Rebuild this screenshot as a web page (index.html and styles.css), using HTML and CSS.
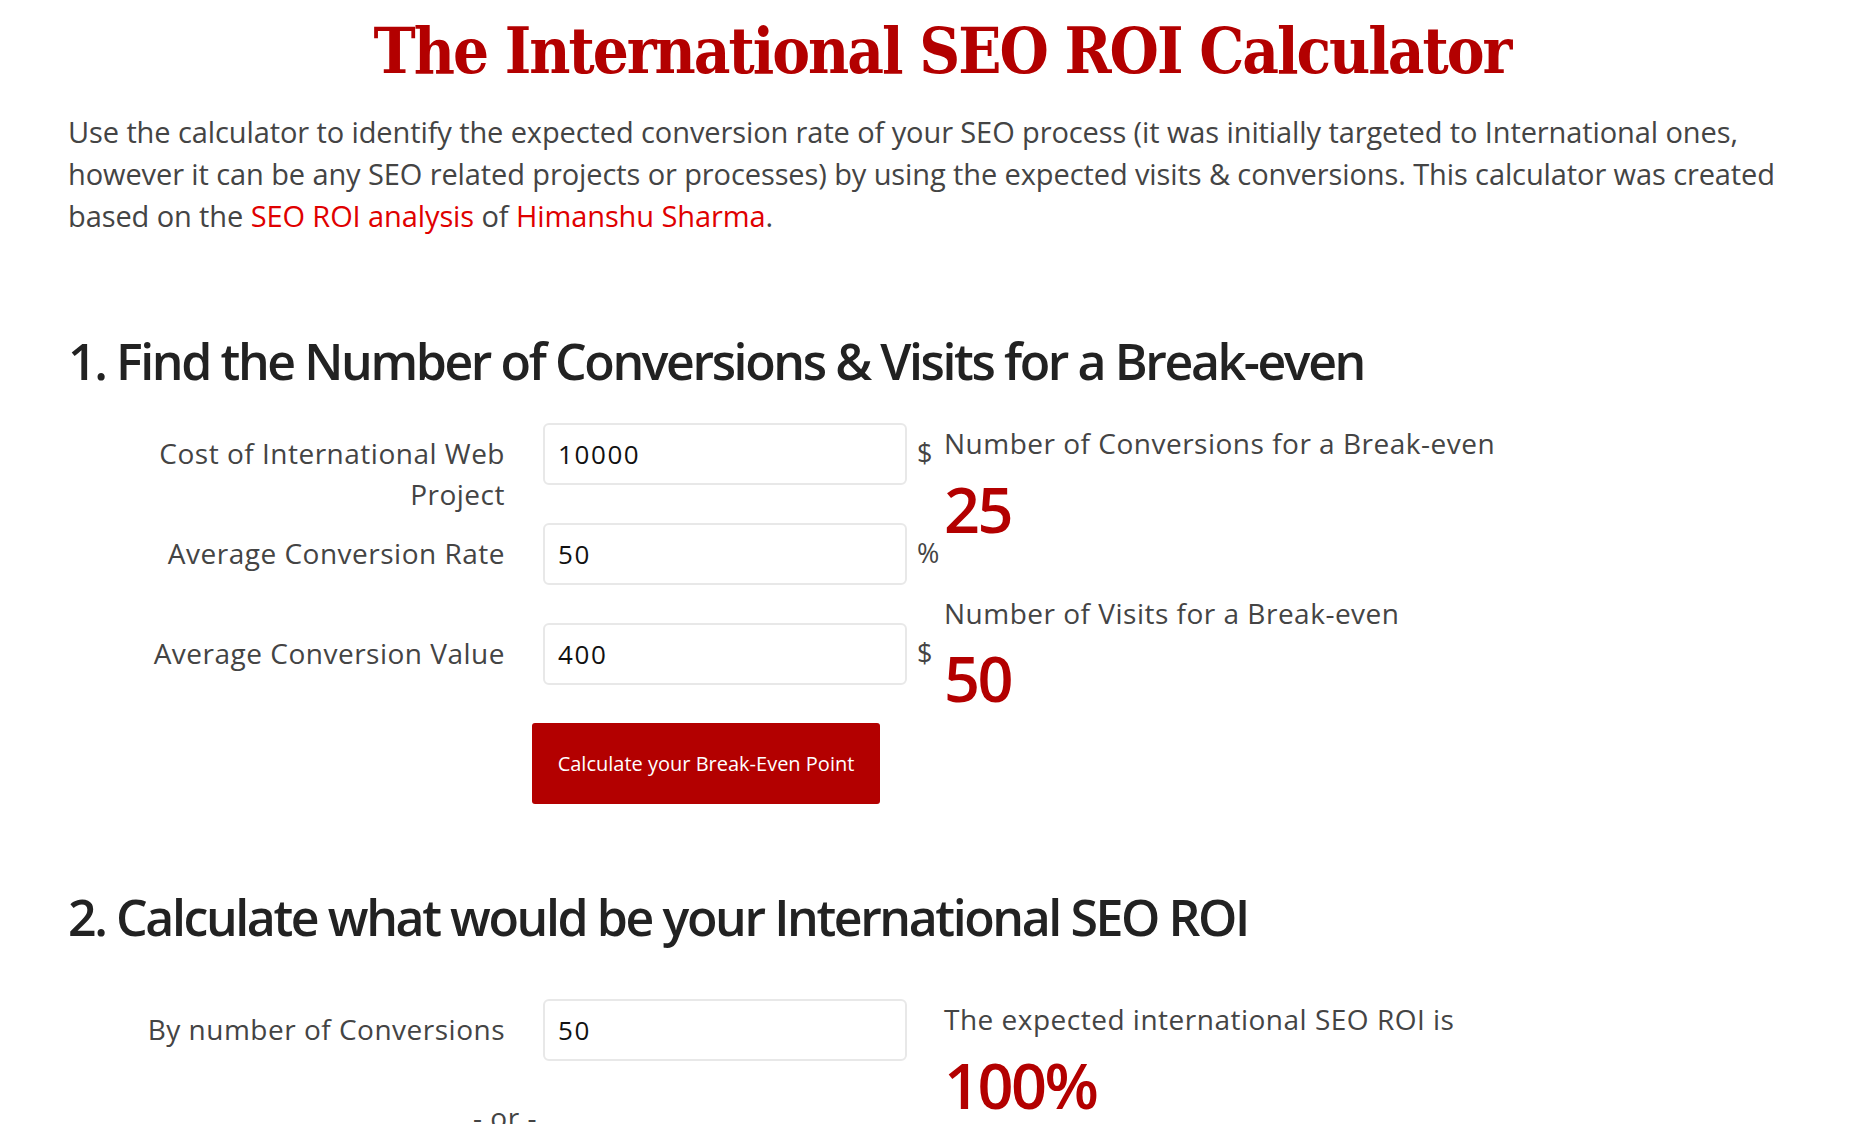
FILE: index.html
```html
<!DOCTYPE html>
<html lang="en">
<head>
    <meta charset="UTF-8">
    <meta name="viewport" content="width=device-width, initial-scale=1.0">
    <title>International SEO ROI Calculator</title>

    <link rel="stylesheet" href="styles.css">
</head>
<body>

    <div class="page">
        <h1 class="title">The International SEO ROI Calculator</h1>

        <p class="intro">
            Use the calculator to identify the expected conversion rate of your SEO process (it was initially targeted to International ones, however it can be any SEO related projects or processes) by using the expected visits &amp; conversions. This calculator was created based on the <a href="#">SEO ROI analysis</a> of <a href="#">Himanshu Sharma</a>.
        </p>

        <section class="calc calc-breakeven">
            <h2 class="calc-heading">1. Find the Number of Conversions &amp; Visits for a Break-even</h2>

            <div class="calc-body">
                <form class="calc-form">
                    <div class="form-row">
                        <label class="form-label" for="js-cost">Cost of International Web Project</label>
                        <input class="form-input" id="js-cost" type="text" value="10000">
                        <span class="form-unit">$</span>
                    </div>
                    <div class="form-row">
                        <label class="form-label" for="js-rate">Average Conversion Rate</label>
                        <input class="form-input" id="js-rate" type="text" value="50">
                        <span class="form-unit">%</span>
                    </div>
                    <div class="form-row">
                        <label class="form-label" for="js-value">Average Conversion Value</label>
                        <input class="form-input" id="js-value" type="text" value="400">
                        <span class="form-unit">$</span>
                    </div>
                    <div class="form-actions">
                        <button class="calc-button" type="button">Calculate your Break-Even Point</button>
                    </div>
                </form>

                <div class="calc-results">
                    <div class="result">
                        <div class="result-label">Number of Conversions for a Break-even</div>
                        <div class="result-value">25</div>
                    </div>
                    <div class="result">
                        <div class="result-label">Number of Visits for a Break-even</div>
                        <div class="result-value">50</div>
                    </div>
                </div>
            </div>
        </section>

        <section class="calc calc-roi">
            <h2 class="calc-heading">2. Calculate what would be your International SEO ROI</h2>

            <div class="calc-body">
                <form class="calc-form">
                    <div class="form-row">
                        <label class="form-label" for="js-conversions">By number of Conversions</label>
                        <input class="form-input" id="js-conversions" type="text" value="50">
                        <span class="form-unit"></span>
                    </div>
                    <div class="form-or">- or -</div>
                    <div class="form-row">
                        <label class="form-label" for="js-visits">By number of Visits</label>
                        <input class="form-input" id="js-visits" type="text" value="100">
                        <span class="form-unit"></span>
                    </div>
                    <div class="form-actions">
                        <button class="calc-button" type="button">Calculate your SEO ROI</button>
                    </div>
                </form>

                <div class="calc-results">
                    <div class="result">
                        <div class="result-label">The expected international SEO ROI is</div>
                        <div class="result-value">100%</div>
                    </div>
                </div>
            </div>
        </section>
    </div>

</body>
</html>
```

FILE: styles.css
```css
* {
    box-sizing: border-box;
}

body {
    margin: 0;
    background: #fff;
    color: #444;
    font-family: "Open Sans", "Noto Sans", Arial, sans-serif;
}

.page {
    padding: 16px 34px 60px 68px;
}

.title {
    margin: 0;
    text-align: center;
    font-family: "DejaVu Serif", "Liberation Serif", serif;
    font-size: 63px;
    font-weight: bold;
    font-stretch: condensed;
    letter-spacing: -2px;
    line-height: 70px;
    color: #b30000;
}

.intro {
    margin: 25px 0 0;
    font-size: 29px;
    letter-spacing: -0.1px;
    line-height: 42px;
    color: #444;
}

.intro a {
    color: #e00000;
    text-decoration: none;
}

.calc-heading {
    margin: 0;
    font-size: 50px;
    font-weight: 600;
    letter-spacing: -2.4px;
    line-height: 55px;
    color: #222;
}

.calc-breakeven {
    margin-top: 97px;
}

.calc-roi {
    margin-top: 86px;
}

.calc-breakeven .calc-body {
    margin-top: 34px;
}

.calc-roi .calc-body {
    margin-top: 54px;
}

.calc-body {
    display: flex;
    align-items: flex-start;
}

.calc-form {
    margin-left: 55px;
    width: 811px;
}

.form-row {
    display: flex;
    align-items: flex-start;
    height: 100px;
}

.form-label {
    width: 382px;
    margin-right: 38px;
    padding-top: 10px;
    text-align: right;
    font-size: 28px;
    letter-spacing: 0.5px;
    line-height: 40.5px;
    color: #444;
}

.form-input {
    width: 364px;
    height: 62px;
    padding: 0 13px;
    border: 2px solid #e8e8e8;
    border-radius: 6px;
    font-family: "Open Sans", "Noto Sans", Arial, sans-serif;
    font-size: 26px;
    letter-spacing: 1.6px;
    color: #111;
    background: #fff;
    outline: none;
}

.form-unit {
    width: 17px;
    margin-left: 10px;
    padding-top: 10px;
    font-size: 27px;
    line-height: 40.5px;
    color: #444;
}

.form-or {
    width: 764px;
    text-align: center;
    font-size: 28px;
    letter-spacing: 0.5px;
    line-height: 40.5px;
    color: #444;
    margin-top: -2px;
}

.form-actions {
    padding-left: 409px;
}

.calc-button {
    width: 348px;
    height: 81px;
    padding: 0;
    border: none;
    border-radius: 3px;
    background-color: #b30000;
    color: #fff;
    font-family: "Open Sans", "Noto Sans", Arial, sans-serif;
    font-size: 20px;
    white-space: nowrap;
    cursor: pointer;
}

.calc-results {
    margin-left: 10px;
}

.result + .result {
    margin-top: 50px;
}

.result-label {
    font-size: 28px;
    letter-spacing: 0.5px;
    line-height: 40.5px;
    color: #444;
}

.result-value {
    margin-top: 10px;
    font-size: 63px;
    font-weight: 600;
    letter-spacing: -2.5px;
    line-height: 69px;
    color: #b30000;
}
```
